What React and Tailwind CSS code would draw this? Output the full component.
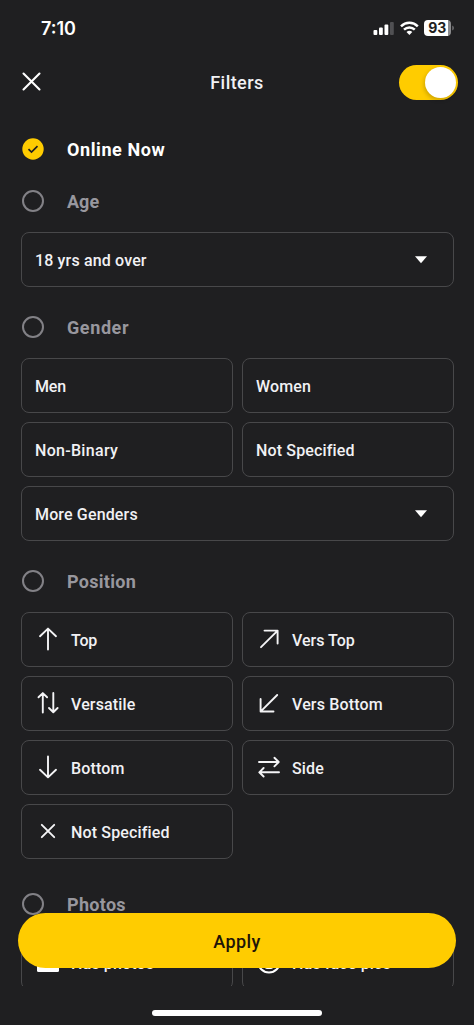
import React from "react";

function Glyph({ d, width = 1.9 }) {
  return (
    <svg viewBox="0 0 26 26" className="h-[26px] w-[26px] shrink-0" fill="none" stroke="#f4f4f6" strokeWidth={width} strokeLinecap="round" strokeLinejoin="round">
      <path d={d} />
    </svg>
  );
}

const ICONS = {
  up: "M13 23.5V2.8M5 10.2l8-7.6 8 7.6",
  both: "M7.8 22.5V3.5M3.5 7.3l4.3-4.2 4.3 4.2M18.3 3v19M14 18l4.3 4.2 4.3-4.2",
  down: "M13 2.5V23.200M5 15.800l8 7.600 8-7.600",
  upRight: "M5 21.2 21.4 4.8M8.5 4.6H21.6V17.5",
  downLeft: "M21.2 5 4.8 21.4M4.6 9V21.5H17.5",
  side: "M3 8H22.5M18.4 3.8 22.7 8l-4.3 4.3M23 18.3H3.5M7.6 14 3.3 18.3l4.3 4.2",
  cross: "M6.8 6.8 19.2 19.2M19.2 6.8 6.8 19.2",
};

function Caret() {
  return (
    <svg viewBox="0 0 12 8" className="mr-[26px] ml-auto h-2 w-3" fill="#fff">
      <path d="M0 .3H12L6 7.300Z" />
    </svg>
  );
}

function Box({ children, wide, icon, caret, track = "tracking-[0.15px]" }) {
  return (
    <div className={`flex h-[55px] items-center rounded-lg border border-[#48484a] pl-[13px] text-[16px] font-medium text-[#f1f1f4] ${wide ? "col-span-2" : ""}`}>
      {icon && <div className="mr-2.5 -mt-px flex">{icon}</div>}
      <span className={`mt-[3px] whitespace-nowrap ${track}`}>{children}</span>
      {caret && <Caret />}
    </div>
  );
}

function Heading({ children, track = "tracking-[0.3px]", className = "h-[71px] pt-[8px]" }) {
  return (
    <div className={`flex items-center ${className}`}>
      <span className="ml-px h-[22px] w-[22px] rounded-full border-2 border-[#828186]" />
      <span className={`mt-px ml-[23px] text-[18px] font-bold text-[#98979e] ${track}`}>{children}</span>
    </div>
  );
}

function Grid({ children }) {
  return <div className="grid grid-cols-2 gap-[9px]">{children}</div>;
}

function StatusBar() {
  return (
    <div className="flex h-[56px] items-center pr-[19px] pl-[41px]">
      <span className="pt-px font-['Inter'] text-[18px] font-semibold text-white">7:10</span>
      <svg viewBox="0 0 82 18" className="ml-auto h-[18px] w-[82px]">
        <rect x="0.5" y="11" width="3.8" height="5" rx="1" fill="#fff" />
        <rect x="6" y="8.5" width="3.8" height="7.5" rx="1" fill="#fff" />
        <rect x="11.5" y="5.5" width="3.8" height="10.5" rx="1" fill="#fff" />
        <rect x="17" y="3" width="3.8" height="13" rx="1" fill="#505053" />
        <g fill="none" stroke="#fff" strokeWidth="2.5">
          <path d="M28 7.3a12 12 0 0 1 16.8 0" />
          <path d="M31 10.7a7.8 7.8 0 0 1 10.8 0" />
        </g>
        <path d="M36.4 16 33.5 13.1a4.2 4.2 0 0 1 5.8 0Z" fill="#fff" />
        <path d="M55 1H75V17H55a4 4 0 0 1-4-4V5a4 4 0 0 1 4-4Z" fill="#fff" />
        <path d="M75 1a4 4 0 0 1 3 4v8a4 4 0 0 1-3 4Z" fill="#8b8b8d" />
        <path d="M79.3 6.5c2 .7 2 4.300 0 5Z" fill="#77777a" />
        <text x="64.2" y="14" textAnchor="middle" fontFamily="Inter, sans-serif" fontWeight="700" fontSize="14" fill="#1f1f21">93</text>
      </svg>
    </div>
  );
}

export default function App() {
  return (
    <div className="relative flex h-[1025px] w-[474px] flex-col overflow-hidden bg-[#1f1f21] font-['Roboto','Liberation_Sans',sans-serif]">
      <StatusBar />
      <header className="grid h-[52px] grid-cols-[1fr_auto_1fr] items-center pr-[16px] pl-[22px]">
        <svg viewBox="0 0 20 20" className="h-5 w-5" stroke="#fff" strokeWidth="2.100" strokeLinecap="round">
          <path d="M1.500 1.500 17.500 17.500M17.500 1.500 1.500 17.500" />
        </svg>
        <h1 className="mr-[6px] text-[18px] font-medium tracking-[0.45px] text-[#f1f1f4]">Filters</h1>
        <div className="flex h-[35px] w-[59px] items-center justify-end justify-self-end rounded-full bg-[#ffcc00] pr-[2px]">
          <span className="h-[31px] w-[31px] rounded-full bg-white shadow-[-1px_2px_4px_rgba(0,0,0,0.2)]" />
        </div>
      </header>
      <main className="h-[878px] overflow-hidden pr-5 pl-[21px]">
        <div className="flex h-[82px] items-center">
          <svg viewBox="0 0 22 22" className="ml-px h-[22px] w-[22px]">
            <circle cx="11" cy="11" r="10.700" fill="#ffcc00" />
            <path d="M6.500 11.200 9.500 14 15.500 8.200" fill="none" stroke="#1f1f21" strokeWidth="1.700" />
          </svg>
          <span className="ml-[23px] text-[18px] font-bold tracking-[0.6px] text-white">Online Now</span>
        </div>
        <Heading className="-mt-px h-[43px] pb-[19px]" track="">Age</Heading>
        <Grid><Box wide caret>18 yrs and over</Box></Grid>
        <Heading track="tracking-[0.6px]">Gender</Heading>
        <Grid>
          <Box track="tracking-[-0.2px]">Men</Box>
          <Box>Women</Box>
          <Box track="tracking-[0.3px]">Non-Binary</Box>
          <Box>Not Specified</Box>
          <Box wide caret>More Genders</Box>
        </Grid>
        <Heading>Position</Heading>
        <Grid>
          <Box icon={<Glyph d={ICONS.up} />} track="tracking-[-0.2px]">Top</Box>
          <Box icon={<Glyph d={ICONS.upRight} />} track="">Vers Top</Box>
          <Box icon={<Glyph d={ICONS.both} />}>Versatile</Box>
          <Box icon={<Glyph d={ICONS.downLeft} />}>Vers Bottom</Box>
          <Box icon={<Glyph d={ICONS.down} />}>Bottom</Box>
          <Box icon={<Glyph d={ICONS.side} />}>Side</Box>
          <Box icon={<Glyph d={ICONS.cross} />}>Not Specified</Box>
        </Grid>
        <Heading className="h-[76px] pt-[13px]">Photos</Heading>
        <Grid>
          <Box icon={<svg viewBox="0 0 26 26" className="h-[26px] w-[26px]"><rect x="2" y="3" width="22" height="20" rx="1.500" fill="#fff" /></svg>}>Has photos</Box>
          <Box icon={<svg viewBox="0 0 26 26" className="h-[26px] w-[26px]" fill="none" stroke="#fff" strokeWidth="2"><circle cx="13" cy="12.500" r="11" /><path d="M7.500 15.500a6 6 0 0 0 11 0Z" fill="#fff" /></svg>}>Has face pics</Box>
        </Grid>
      </main>
      <button className="absolute top-[913px] left-[18px] h-[55px] w-[438px] rounded-full bg-[#ffcc00] pt-px text-[18px] font-medium tracking-[0.4px] text-[#1f1508]">Apply</button>
      <div className="mt-6 h-[6px] w-[170px] self-center rounded-full bg-white" />
    </div>
  );
}
